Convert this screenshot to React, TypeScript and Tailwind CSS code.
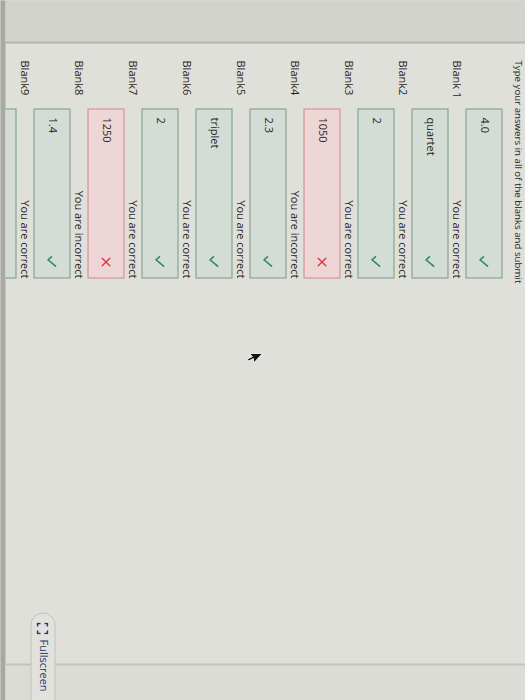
import React from "react";

type Blank = {
  label: string;
  value: string;
  correct: boolean;
};

const blanks: Blank[] = [
  { label: "Blank 1", value: "4.0", correct: true },
  { label: "Blank2", value: "quartet", correct: true },
  { label: "Blank3", value: "2", correct: true },
  { label: "Blank4", value: "1050", correct: false },
  { label: "Blank5", value: "2.3", correct: true },
  { label: "Blank6", value: "triplet", correct: true },
  { label: "Blank7", value: "2", correct: true },
  { label: "Blank8", value: "1250", correct: false },
  { label: "Blank9", value: "1.4", correct: true },
];

function CheckIcon() {
  return (
    <svg width="14" height="14" viewBox="0 0 24 24" fill="none" stroke="#2c8553" strokeWidth="2.6" strokeLinecap="round" strokeLinejoin="round">
      <polyline points="20 5 9 18 4 12" />
    </svg>
  );
}

function CrossIcon() {
  return (
    <svg width="13" height="13" viewBox="0 0 24 24" fill="none" stroke="#d6343f" strokeWidth="2.4" strokeLinecap="round">
      <line x1="5" y1="5" x2="19" y2="19" />
      <line x1="19" y1="5" x2="5" y2="19" />
    </svg>
  );
}

function BlankRow({ blank }: { blank: Blank }) {
  return (
    <div className="grid grid-cols-[48px_170px]">
      <div className="flex items-end h-[54px]">
        <span className="leading-[17px]">{blank.label}</span>
      </div>
      <div className="flex flex-col">
        <div
          className={
            blank.correct
              ? "h-[37px] flex items-center justify-between pl-[8px] pr-[9px] border border-[#7b9785] bg-[#d3ddd5]"
              : "h-[37px] flex items-center justify-between pl-[8px] pr-[9px] border border-[#cf8890] bg-[#eed5d6]"
          }
        >
          <span>{blank.value}</span>
          {blank.correct ? <CheckIcon /> : <CrossIcon />}
        </div>
        <div className="h-[17px] leading-[17px] text-right">
          {blank.correct ? "You are correct" : "You are incorrect"}
        </div>
      </div>
    </div>
  );
}

function Cursor() {
  return (
    <svg width="12" height="17" viewBox="0 0 12 17">
      <path d="M1 1 L1 14 L4 11 L6.5 16 L8.5 15 L6 10 L10.5 10 Z" fill="#111" stroke="#fff" strokeWidth="0.8" />
    </svg>
  );
}

export default function App() {
  return (
    <div className="w-[525px] h-[700px] overflow-hidden flex items-center justify-center bg-[#d9d9d3]">
      <div
        className="relative shrink-0 w-[700px] h-[525px] rotate-90 flex bg-[#e0e0db] text-[11px] text-[#1f1f1f] border-b-[5px] border-[#a9a9a4]"
        style={{ fontFamily: '"Open Sans", "Liberation Sans", sans-serif' }}
      >
        {/* left strip */}
        <div className="w-[43px] shrink-0 bg-[#d3d3cd] border-r-2 border-[#b7b7b1]" />

        {/* main question area */}
        <div className="w-[620px] shrink-0 pl-[17px] overflow-hidden">
          <div className="h-[23px] leading-[16px] text-[9.7px]">Type your answers in all of the blanks and submit</div>
          {blanks.map((b) => (
            <BlankRow key={b.label} blank={b} />
          ))}
          <div className="grid grid-cols-[48px_170px]">
            <div />
            <div className="h-[37px] border border-[#7b9785] bg-[#d3ddd5]" />
          </div>
        </div>

        {/* right strip */}
        <div className="flex-1 border-l-2 border-[#c4c4be] bg-[#dcdcd6]" />

        {/* fullscreen button */}
        <button className="absolute left-[612px] top-[470px] h-[25px] w-[100px] flex items-center gap-[5px] pl-[9px] rounded-full border border-[#c2c2bc] bg-[#e2e2dd] text-[#2a3370] text-[11px]">
          <svg width="12" height="12" viewBox="0 0 12 12" fill="none" stroke="#2a3370" strokeWidth="1.6">
            <path d="M1 4 V1 H4 M8 1 H11 V4 M11 8 V11 H8 M4 11 H1 V8" />
          </svg>
          <span>Fullscreen</span>
        </button>

        {/* mouse pointer */}
        <div className="absolute left-[352px] top-[262px]">
          <Cursor />
        </div>
      </div>
    </div>
  );
}
